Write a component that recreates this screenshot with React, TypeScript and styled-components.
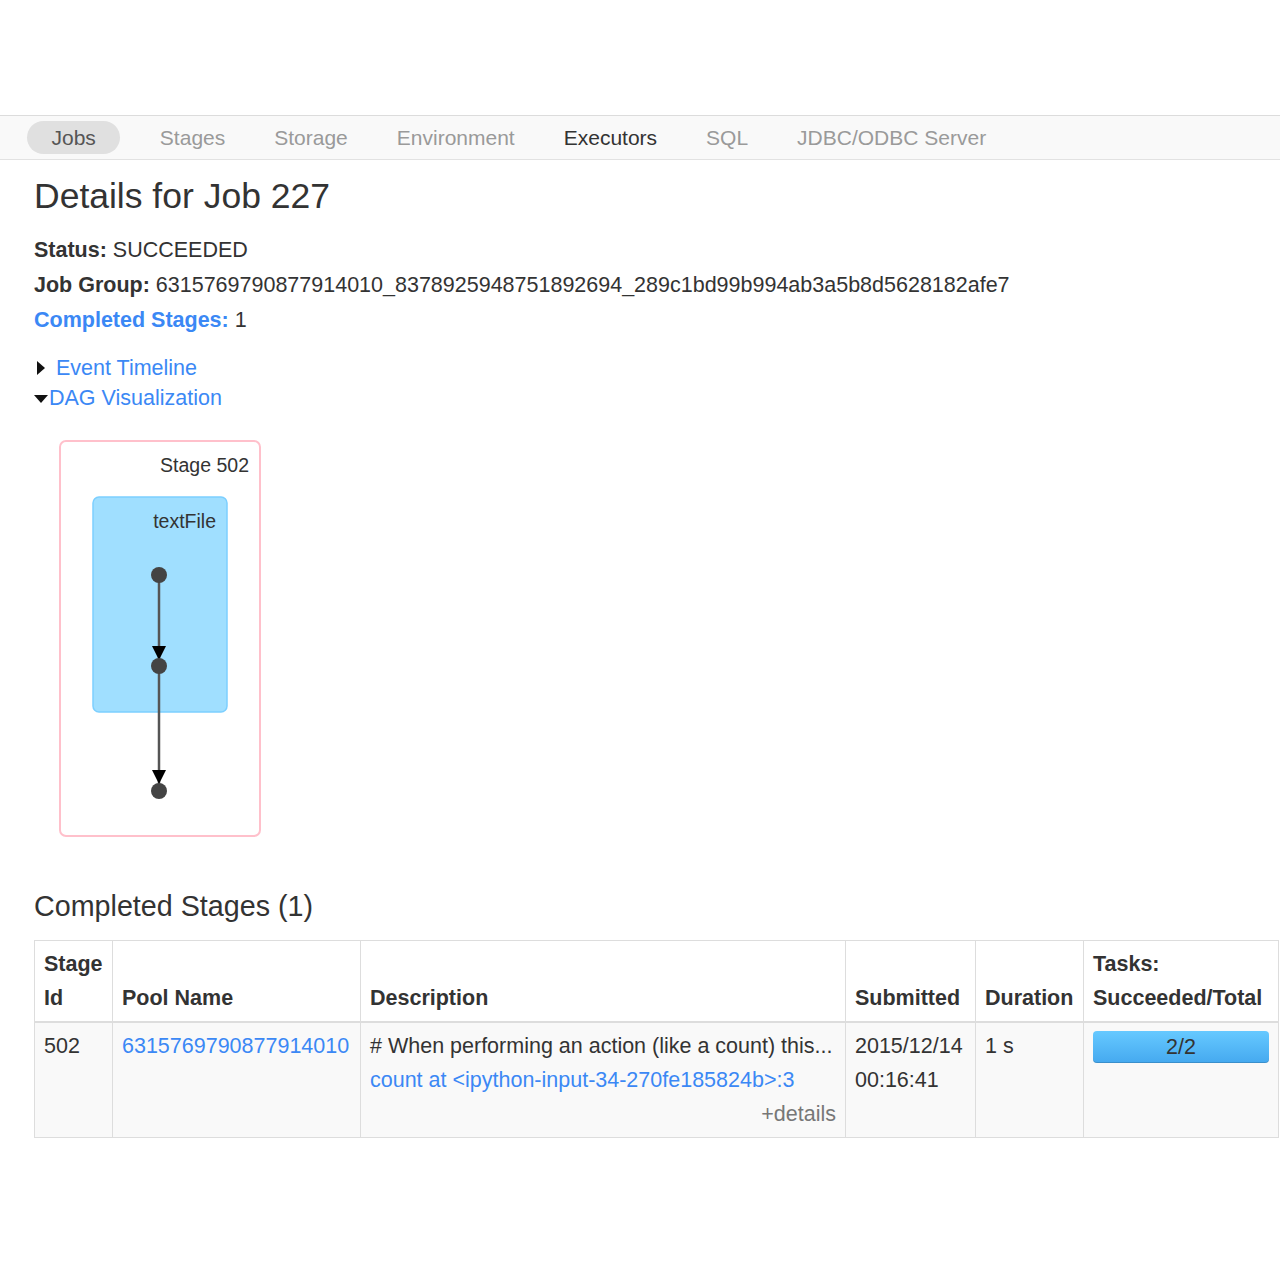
import React from "react";
import styled, { createGlobalStyle } from "styled-components";

const GlobalStyle = createGlobalStyle`
  html, body {
    margin: 0;
    padding: 0;
    background: #fff;
    font-family: "Liberation Sans", Arial, sans-serif;
    color: #333;
  }
`;

const TopSpace = styled.div`
  height: 115px;
`;

const NavBar = styled.nav`
  height: 43px;
  border-top: 1px solid #dcdcdc;
  border-bottom: 1px solid #e2e2e2;
  background: #f9f9f9;
  display: flex;
  align-items: center;
  padding-left: 27px;
`;

const NavItem = styled.a<{ $active?: boolean; $dark?: boolean }>`
  font-size: 21px;
  line-height: 33px;
  height: 33px;
  padding: 0 24.5px;
  border-radius: 17px;
  color: ${(p) => (p.$active ? "#555" : p.$dark ? "#333" : "#9a9a9a")};
  background: ${(p) => (p.$active ? "#e0e0e0" : "transparent")};
  margin-right: ${(p) => (p.$active ? "15px" : "0")};
  text-decoration: none;
  cursor: pointer;
`;

const Content = styled.main`
  padding: 0 0 0 34px;
`;

const Title = styled.h1`
  margin: 16px 0 0;
  font-size: 35.5px;
  line-height: 40px;
  font-weight: normal;
  color: #333;
`;

const InfoList = styled.ul`
  list-style: none;
  margin: 17px 0 0;
  padding: 0;
`;

const InfoItem = styled.li`
  font-size: 21.5px;
  line-height: 35px;
`;

const Label = styled.strong<{ $link?: boolean }>`
  color: ${(p) => (p.$link ? "#3b88f5" : "#333")};
`;

const Toggle = styled.div<{ $tight?: boolean }>`
  display: flex;
  align-items: center;
  gap: ${(p) => (p.$tight ? "1px" : "11px")};
  font-size: 21.5px;
  line-height: 30px;
  color: #3b88f5;
  cursor: pointer;
`;

const Toggles = styled.div`
  margin-top: 15px;
`;

const Arrow = styled.span<{ $open?: boolean }>`
  display: inline-block;
  width: 0;
  height: 0;
  ${(p) =>
    p.$open
      ? `border-left: 7.5px solid transparent;
         border-right: 7.5px solid transparent;
         border-top: 8px solid #111;
         margin-top: 2px;`
      : `border-top: 7px solid transparent;
         border-bottom: 7px solid transparent;
         border-left: 8px solid #111;
         margin-left: 3px;`}
`;

const DagBox = styled.div`
  margin-top: 17px;
  height: 420px;
`;

const SectionTitle = styled.h3`
  margin: 39px 0 0;
  font-size: 28.7px;
  line-height: 34px;
  font-weight: normal;
  color: #333;
`;

const Table = styled.table`
  margin-top: 17px;
  border-collapse: collapse;
  border: 1px solid #ddd;
  table-layout: fixed;
  width: 1244px;
  font-size: 21.5px;
`;

const Th = styled.th`
  text-align: left;
  vertical-align: bottom;
  font-weight: bold;
  line-height: 34px;
  padding: 6px 9px;
  border: 1px solid #ddd;
  border-bottom-width: 2px;
  color: #333;
  white-space: nowrap;
`;

const Td = styled.td`
  vertical-align: top;
  line-height: 34px;
  padding: 6px 9px;
  border: 1px solid #ddd;
  background: #f9f9f9;
  white-space: nowrap;
  overflow: hidden;
`;

const Link = styled.a`
  color: #3b88f5;
  text-decoration: none;
  display: block;
`;

const Details = styled.div`
  text-align: right;
  color: #777;
`;

const Progress = styled.div`
  margin-top: 2px;
  height: 32px;
  border-radius: 4px;
  background: linear-gradient(to bottom, #66c9ff, #45a9ef);
  box-shadow: inset 0 -1px 0 rgba(0, 0, 0, 0.15);
  text-align: center;
  line-height: 32px;
  color: #333;
  font-size: 21.5px;
`;

const tabs = [
  { name: "Jobs", active: true },
  { name: "Stages" },
  { name: "Storage" },
  { name: "Environment" },
  { name: "Executors", dark: true },
  { name: "SQL" },
  { name: "JDBC/ODBC Server" },
];

const DagGraph = () => (
  <svg width="300" height="420" viewBox="0 0 300 420">
    <rect x="26" y="11" width="200" height="395" rx="6" fill="#fff" stroke="#ffc0cb" strokeWidth="2" />
    <text x="215" y="42" textAnchor="end" fontSize="19.5" fill="#333" fontFamily="Liberation Sans, Arial, sans-serif">
      Stage 502
    </text>
    <rect x="59" y="67" width="134" height="215" rx="6" fill="#a0dfff" stroke="#7ccfff" strokeWidth="1.5" />
    <text x="182" y="98" textAnchor="end" fontSize="19.5" fill="#333" fontFamily="Liberation Sans, Arial, sans-serif">
      textFile
    </text>
    <line x1="125" y1="145" x2="125" y2="361" stroke="#555" strokeWidth="2.5" />
    <polygon points="118,216 132,216 125,230" fill="#000" />
    <polygon points="118,340 132,340 125,354" fill="#000" />
    <circle cx="125" cy="145" r="8" fill="#444" />
    <circle cx="125" cy="236" r="8" fill="#444" />
    <circle cx="125" cy="361" r="8" fill="#444" />
  </svg>
);

export default function App() {
  return (
    <>
      <GlobalStyle />
      <TopSpace />
      <NavBar>
        {tabs.map((t) => (
          <NavItem key={t.name} $active={t.active} $dark={t.dark}>
            {t.name}
          </NavItem>
        ))}
      </NavBar>
      <Content>
        <Title>Details for Job 227</Title>
        <InfoList>
          <InfoItem>
            <Label>Status:</Label> SUCCEEDED
          </InfoItem>
          <InfoItem>
            <Label>Job Group:</Label> 6315769790877914010_8378925948751892694_289c1bd99b994ab3a5b8d5628182afe7
          </InfoItem>
          <InfoItem>
            <Label $link>Completed Stages:</Label> 1
          </InfoItem>
        </InfoList>
        <Toggles>
          <Toggle>
            <Arrow />
            Event Timeline
          </Toggle>
          <Toggle $tight>
            <Arrow $open />
            DAG Visualization
          </Toggle>
        </Toggles>
        <DagBox>
          <DagGraph />
        </DagBox>
        <SectionTitle>Completed Stages (1)</SectionTitle>
        <Table>
          <colgroup>
            <col style={{ width: 78 }} />
            <col style={{ width: 248 }} />
            <col style={{ width: 485 }} />
            <col style={{ width: 130 }} />
            <col style={{ width: 108 }} />
            <col style={{ width: 195 }} />
          </colgroup>
          <thead>
            <tr>
              <Th>
                Stage
                <br />
                Id
              </Th>
              <Th>Pool Name</Th>
              <Th>Description</Th>
              <Th>Submitted</Th>
              <Th>Duration</Th>
              <Th>
                Tasks:
                <br />
                Succeeded/Total
              </Th>
            </tr>
          </thead>
          <tbody>
            <tr>
              <Td>502</Td>
              <Td>
                <Link>6315769790877914010</Link>
              </Td>
              <Td>
                <div># When performing an action (like a count) this...</div>
                <Link>count at &lt;ipython-input-34-270fe185824b&gt;:3</Link>
                <Details>+details</Details>
              </Td>
              <Td>
                2015/12/14
                <br />
                00:16:41
              </Td>
              <Td>1 s</Td>
              <Td>
                <Progress>2/2</Progress>
              </Td>
            </tr>
          </tbody>
        </Table>
      </Content>
    </>
  );
}
